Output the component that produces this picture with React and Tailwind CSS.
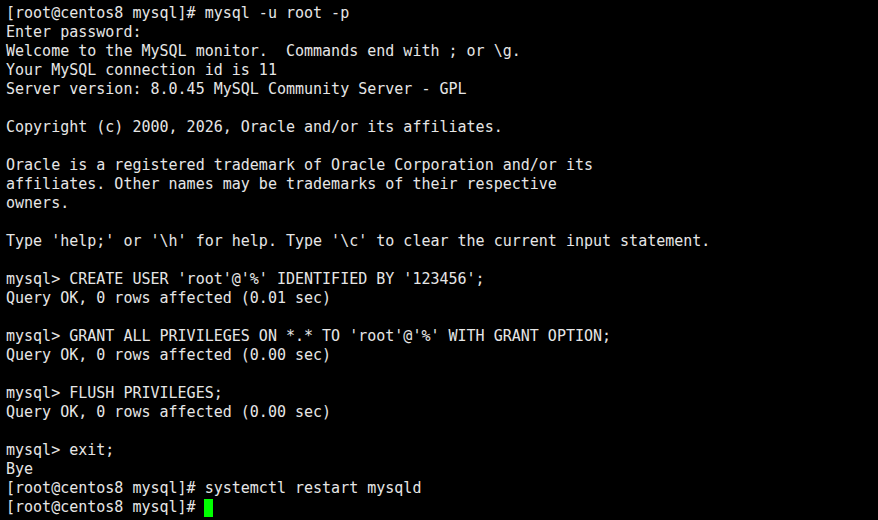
import React from "react";

const lines = [
  "[root@centos8 mysql]# mysql -u root -p",
  "Enter password:",
  "Welcome to the MySQL monitor.  Commands end with ; or \\g.",
  "Your MySQL connection id is 11",
  "Server version: 8.0.45 MySQL Community Server - GPL",
  "",
  "Copyright (c) 2000, 2026, Oracle and/or its affiliates.",
  "",
  "Oracle is a registered trademark of Oracle Corporation and/or its",
  "affiliates. Other names may be trademarks of their respective",
  "owners.",
  "",
  "Type 'help;' or '\\h' for help. Type '\\c' to clear the current input statement.",
  "",
  "mysql> CREATE USER 'root'@'%' IDENTIFIED BY '123456';",
  "Query OK, 0 rows affected (0.01 sec)",
  "",
  "mysql> GRANT ALL PRIVILEGES ON *.* TO 'root'@'%' WITH GRANT OPTION;",
  "Query OK, 0 rows affected (0.00 sec)",
  "",
  "mysql> FLUSH PRIVILEGES;",
  "Query OK, 0 rows affected (0.00 sec)",
  "",
  "mysql> exit;",
  "Bye",
  "[root@centos8 mysql]# systemctl restart mysqld",
];

export default function App() {
  return (
    <div className="w-[878px] h-[520px] bg-black overflow-hidden pl-[6px] pt-[4px] text-[#e6e6e6] text-[15px] leading-[19px] font-['DejaVu_Sans_Mono',monospace] whitespace-pre">
      {lines.map((l, i) => (
        <div key={i} className="h-[19px]">
          {l}
        </div>
      ))}
      <div className="h-[19px] flex items-center">
        <span>[root@centos8 mysql]# </span>
        <span className="inline-block w-[9px] h-[18px] bg-[#00ff00] -ml-[1px]" />
      </div>
    </div>
  );
}
